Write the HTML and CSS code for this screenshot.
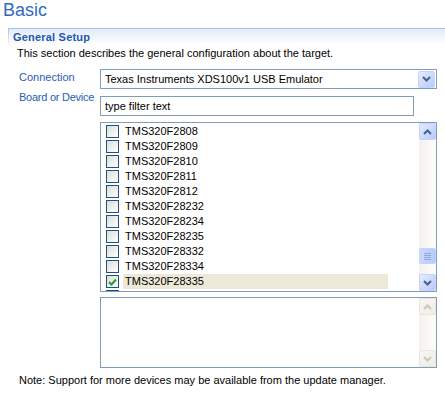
FILE: index.html
```html
<!DOCTYPE html>
<html>
<head>
<meta charset="utf-8">
<link rel="stylesheet" href="styles.css">
</head>
<body>
<div class="page">
  <h1 class="title">Basic</h1>
  <section class="section">
    <div class="section-head">General Setup</div>
    <p class="desc">This section describes the general configuration about the target.</p>
    <div class="form">
      <div class="lbl">Connection</div>
      <div class="combo">
        <span class="combo-text">Texas Instruments XDS100v1 USB Emulator</span>
        <span class="sb-btn combo-btn"><svg width="9" height="6" viewBox="0 0 9 6"><path d="M1 1 L4.5 4.5 L8 1" fill="none" stroke="#4d6185" stroke-width="2"/></svg></span>
      </div>
      <div class="lbl lbl2">Board or Device</div>
      <div class="filter-row"><div class="filter">type filter text</div></div>
      <div></div>
      <div class="list">
        <div class="rows">
          <div class="row"><span class="cb"></span><span class="item">TMS320F2808</span></div>
          <div class="row"><span class="cb"></span><span class="item">TMS320F2809</span></div>
          <div class="row"><span class="cb"></span><span class="item">TMS320F2810</span></div>
          <div class="row"><span class="cb"></span><span class="item">TMS320F2811</span></div>
          <div class="row"><span class="cb"></span><span class="item">TMS320F2812</span></div>
          <div class="row"><span class="cb"></span><span class="item">TMS320F28232</span></div>
          <div class="row"><span class="cb"></span><span class="item">TMS320F28234</span></div>
          <div class="row"><span class="cb"></span><span class="item">TMS320F28235</span></div>
          <div class="row"><span class="cb"></span><span class="item">TMS320F28332</span></div>
          <div class="row"><span class="cb"></span><span class="item">TMS320F28334</span></div>
          <div class="row selected"><span class="cb checked"><svg width="9" height="8" viewBox="0 0 9 8"><path d="M1 4 L3.5 6.5 L8 1.5" fill="none" stroke="#21a121" stroke-width="2"/></svg></span><span class="item">TMS320F28335</span></div>
          <div class="row"><span class="cb"></span><span class="item"></span></div>
        </div>
        <div class="scrollbar">
          <span class="sb-btn"><svg width="9" height="6" viewBox="0 0 9 6"><path d="M1 5 L4.5 1.5 L8 5" fill="none" stroke="#4d6185" stroke-width="2"/></svg></span>
          <span class="track">
            <span class="thumb"><svg width="7" height="7" viewBox="0 0 7 7"><path d="M0 0.5H7M0 2.5H7M0 4.5H7M0 6.5H7" stroke="#8aa6e8" stroke-width="1"/></svg></span>
          </span>
          <span class="sb-btn"><svg width="9" height="6" viewBox="0 0 9 6"><path d="M1 1 L4.5 4.5 L8 1" fill="none" stroke="#4d6185" stroke-width="2"/></svg></span>
        </div>
      </div>
      <div></div>
      <div class="detail">
        <div class="detail-body"></div>
        <div class="scrollbar disabled">
          <span class="sb-btn"><svg width="9" height="6" viewBox="0 0 9 6"><path d="M1 5 L4.5 1.5 L8 5" fill="none" stroke="#c9c7ba" stroke-width="2"/></svg></span>
          <span class="track"></span>
          <span class="sb-btn"><svg width="9" height="6" viewBox="0 0 9 6"><path d="M1 1 L4.5 4.5 L8 1" fill="none" stroke="#c9c7ba" stroke-width="2"/></svg></span>
        </div>
      </div>
    </div>
    <p class="note">Note: Support for more devices may be available from the update manager.</p>
  </section>
</div>
</body>
</html>
```

FILE: styles.css
```css
html, body {
  margin: 0;
  padding: 0;
  background: #ffffff;
}
body {
  font-family: "Liberation Sans", Arial, sans-serif;
  font-size: 11px;
  color: #000000;
  width: 445px;
  height: 410px;
  overflow: hidden;
}
.page {
  padding: 0;
}
.title {
  margin: 0;
  padding: 0 0 0 3px;
  height: 28px;
  font-size: 18px;
  line-height: 21px;
  font-weight: normal;
  color: #3269bf;
}
.section {
  margin-left: 8px;
  border-top: 1px solid #a9c0e3;
  position: relative;
}
.section::before {
  content: "";
  position: absolute;
  left: 0;
  top: 0;
  width: 1px;
  height: 18px;
  background: linear-gradient(#a9c0e3, #ffffff);
}
.section-head {
  height: 16px;
  padding-left: 5px;
  line-height: 16px;
  font-weight: bold;
  color: #2257ad;
  background: linear-gradient(#e2ebf8, #ffffff);
  letter-spacing: 0.2px;
}
.desc {
  margin: 0;
  padding-left: 9px;
  height: 17px;
  line-height: 17px;
}
.form {
  display: grid;
  grid-template-columns: 81px 337px;
  padding-left: 11px;
  margin-top: 7px;
}
.lbl {
  color: #2a5db4;
  padding-top: 2px;
  line-height: 13px;
  white-space: nowrap;
}
.lbl2 {
  padding-top: 2px;
  letter-spacing: -0.25px;
}
.combo {
  height: 18px;
  border: 1px solid #7f9db9;
  display: flex;
  align-items: center;
  justify-content: space-between;
  padding: 0 1px 0 4px;
}
.combo-text {
  line-height: 18px;
}
.sb-btn {
  display: flex;
  align-items: center;
  justify-content: center;
  width: 15px;
  height: 15px;
  border: 1px solid #c3d3fd;
  border-radius: 2px;
  background: linear-gradient(135deg, #e4ecfe, #b6cbf9);
  flex: none;
}
.combo-btn {
  height: 15px;
}
.filter-row {
  margin-top: 7px;
}
.filter {
  width: 308px;
  height: 18px;
  border: 1px solid #7f9db9;
  line-height: 18px;
  padding-left: 4px;
}
.list {
  margin-top: 6px;
  height: 168px;
  border: 1px solid #7f9db9;
  display: flex;
  overflow: hidden;
}
.rows {
  flex: 1;
  padding-top: 1px;
  overflow: hidden;
}
.row {
  height: 15px;
  display: flex;
  align-items: center;
  padding-left: 5px;
}
.cb {
  box-sizing: border-box;
  width: 13px;
  height: 13px;
  border: 1px solid #1c5180;
  background: linear-gradient(135deg, #dcdcd7, #ffffff);
  display: flex;
  align-items: center;
  justify-content: center;
  flex: none;
}
.item {
  margin-left: 4px;
  width: 263px;
  padding-left: 2px;
  line-height: 15px;
  height: 15px;
}
.row.selected .item {
  background: #ece9d8;
}
.scrollbar {
  width: 17px;
  display: flex;
  flex-direction: column;
  background: linear-gradient(90deg, #f3f1ec, #fdfdfa);
}
.scrollbar .sb-btn {
  width: 15px;
  height: 15px;
}
.track {
  flex: 1;
  display: flex;
  flex-direction: column;
  justify-content: flex-end;
  padding-bottom: 10px;
}
.thumb {
  box-sizing: border-box;
  width: 17px;
  height: 16px;
  border: 1px solid #c3d3fd;
  border-radius: 2px;
  background: linear-gradient(90deg, #c9d8fc, #b6cbf9);
  display: flex;
  align-items: center;
  justify-content: center;
}
.scrollbar.disabled .sb-btn {
  border-color: #e8e6df;
  background: linear-gradient(135deg, #f7f6f3, #eeede6);
}
.detail {
  margin-top: 5px;
  height: 69px;
  border: 1px solid #7f9db9;
  display: flex;
}
.detail-body {
  flex: 1;
}
.note {
  margin: 6px 0 0 0;
  padding-left: 11px;
  line-height: 13px;
}
```
